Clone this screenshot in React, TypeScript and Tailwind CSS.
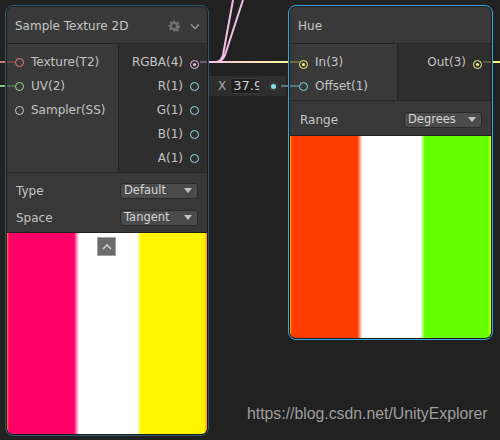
import React from 'react';

const font = { fontFamily: '"DejaVu Sans", Verdana, sans-serif' };

function Port({ color, filled, side }: { color: string; filled?: boolean; side: 'in' | 'out' }) {
  return (
    <span
      className={`relative inline-flex items-center justify-center w-[9px] h-[9px] rounded-full border-[1.5px] ${color} ${side === 'in' ? 'mr-[7px]' : 'ml-[7px]'}`}
    >
      {filled && <span className="w-[3px] h-[3px] rounded-full bg-current" />}
    </span>
  );
}

function Dropdown({ label }: { label: string }) {
  return (
    <div className="flex items-center justify-between w-[78px] h-[16px] rounded-[3px] bg-[#4b4b4b] border border-[#2a2a2a] pl-[3px] pr-[5px] text-[11.5px] text-[#d4d4d4]">
      <span>{label}</span>
      <svg width="8" height="5" viewBox="0 0 8 5">
        <path d="M0 0 H8 L4 5 Z" fill="#c4c4c4" />
      </svg>
    </div>
  );
}

function Header({ title, tools }: { title: string; tools?: boolean }) {
  return (
    <div className="flex items-center justify-between h-[37px] bg-[#393939] border-b border-[#242424] pt-[2px] pl-[8px] pr-[7px] shrink-0">
      <span className="text-[12px] text-[#c6c6c6]">{title}</span>
      {tools && (
        <div className="flex items-center gap-[10px]">
          <svg width="12" height="12" viewBox="0 0 24 24">
            <path
              fill="#707070"
              d="M10 1h4l.6 3.2 2 .9 2.7-1.9 2.8 2.8-1.9 2.7.9 2 3.2.6v4l-3.2.6-.9 2 1.9 2.7-2.8 2.8-2.7-1.9-2 .9L14 23h-4l-.6-3.2-2-.9-2.7 1.9-2.8-2.8 1.9-2.7-.9-2L1 14v-4l3.2-.6.9-2L3.2 4.7 6 1.9l2.7 1.9 2-.9Z M12 8a4 4 0 1 0 0 8a4 4 0 1 0 0-8Z"
              fillRule="evenodd"
            />
          </svg>
          <svg width="10" height="7" viewBox="0 0 10 7">
            <path d="M1 1.5 L5 5.5 L9 1.5" stroke="#9a9a9a" strokeWidth="1.4" fill="none" />
          </svg>
        </div>
      )}
    </div>
  );
}

export default function App() {
  return (
    <div className="relative w-[500px] h-[440px] bg-[#212121] overflow-hidden" style={font}>
      {/* wires */}
      <svg className="absolute left-0 top-0" width="500" height="440">
        <line x1="0" y1="62" x2="6" y2="62" stroke="#c97a7a" strokeWidth="2" />
        <line x1="0" y1="86" x2="6" y2="86" stroke="#7dc47d" strokeWidth="2" />
        <path d="M209 62 H216 Q221 62 223 55 L233 0" stroke="#f3bfe5" strokeWidth="2" fill="none" />
        <path d="M216 62 Q222 62 225 55 L243 0" stroke="#f3bfe5" strokeWidth="2" fill="none" />
        <defs>
          <linearGradient id="pw" x1="0" x2="1" y1="0" y2="0">
            <stop offset="0" stopColor="#f5c3e6" />
            <stop offset="1" stopColor="#fbfb9c" />
          </linearGradient>
        </defs>
        <rect x="209" y="61" width="81" height="2" fill="url(#pw)" />
        <line x1="493" y1="62" x2="500" y2="62" stroke="#f6f67e" strokeWidth="2" />
      </svg>

      {/* Sample Texture 2D node */}
      <div className="absolute left-[5px] top-[5px] w-[204px] h-[431px] rounded-[8px] border border-[#2e5870] p-px bg-[#1b1b1b]">
        <div className="flex flex-col h-full rounded-[6px] overflow-hidden bg-[#2e2e2e]">
          <Header title="Sample Texture 2D" tools />
          <div className="flex h-[128px] shrink-0 text-[12px] text-[#c4c4c4]">
            <div className="relative w-[112px] bg-[#393939] border-r border-[#242424] pt-[5px] pl-[8px]">
              <div className="flex items-center h-[24px] pt-[2px]">
                <Port color="border-[#f08080]" side="in" />
                Texture(T2)
              </div>
              <div className="flex items-center h-[24px] pt-[2px]">
                <Port color="border-[#8fe08f]" side="in" />
                UV(2)
              </div>
              <div className="flex items-center h-[24px] pt-[2px]">
                <Port color="border-[#c8c8c8]" side="in" />
                Sampler(SS)
              </div>
              <span className="absolute left-0 top-[17px] w-[8px] h-[1.5px] bg-[#6a4848]" />
              <span className="absolute left-0 top-[41px] w-[8px] h-[1.5px] bg-[#4f6a4f]" />
            </div>
            <div className="relative flex-1 flex flex-col items-end pt-[5px] pr-[8px]">
              <div className="flex items-center h-[24px] pt-[2px]">
                RGBA(4)
                <span className="text-[#f3bde6]">
                  <Port color="border-[#f3bde6]" filled side="out" />
                </span>
              </div>
              {['R(1)', 'G(1)', 'B(1)', 'A(1)'].map((p) => (
                <div key={p} className="flex items-center h-[24px] pt-[2px]">
                  {p}
                  <Port color="border-[#7fe0e4]" side="out" />
                </div>
              ))}
              <span className="absolute right-0 top-[17px] w-[7px] h-[1.5px] bg-[#6a5a66]" />
            </div>
          </div>
          <div className="flex flex-col justify-center gap-[9px] h-[60px] shrink-0 bg-[#383838] border-t border-[#242424] pt-[3px] pl-[9px] pr-[9px] text-[12px] text-[#c4c4c4]">
            <div className="flex items-center justify-between">
              <span>Type</span>
              <Dropdown label="Default" />
            </div>
            <div className="flex items-center justify-between">
              <span>Space</span>
              <Dropdown label="Tangent" />
            </div>
          </div>
          <div className="relative flex-1 border-t border-[#1e1e1e] bg-[linear-gradient(to_right,#ff8a3a_0%,#ff0066_1%,#ff0066_33.5%,#ffffff_36%,#ffffff_65%,#fff500_67%,#fff500_98.5%,#ff9a30_100%)]">
            <div className="absolute left-[90px] top-[4px] w-[19px] h-[19px] bg-[#6b6b6b] border border-[#a3a3a3] flex items-center justify-center">
              <svg width="10" height="6" viewBox="0 0 10 6">
                <path d="M1 5 L5 1 L9 5" stroke="#d0d0d0" strokeWidth="1.6" fill="none" />
              </svg>
            </div>
          </div>
        </div>
      </div>

      {/* X vector field */}
      <div className="absolute left-[209px] top-[76px] w-[77px] h-[20px] bg-[#2e2e2e] flex items-center pl-[9px] text-[12px] text-[#a8a8a8]">
        <span>X</span>
        <div className="ml-[4px] w-[30px] h-[16px] shrink-0 rounded-[3px] bg-[#1f1f1f] border border-[#3a3a3a] overflow-hidden text-[13px] text-[#d0d0d0] leading-[14px] pl-[2px] whitespace-nowrap">
          37.9
        </div>
        <span className="ml-[11px] w-[5px] h-[5px] shrink-0 rounded-full bg-[#7fe0e4] ring-2 ring-[#3b3b3b]" />
      </div>
      <span className="absolute left-[281px] top-[85px] w-[9px] h-[1.5px] bg-[#52797c]" />

      {/* Hue node */}
      <div className="absolute left-[288px] top-[5px] w-[205px] h-[335px] rounded-[8px] border border-[#3aa7e4] p-px bg-[#1b1b1b]">
        <div className="flex flex-col h-full rounded-[6px] overflow-hidden bg-[#2e2e2e]">
          <Header title="Hue" />
          <div className="flex h-[56px] shrink-0 text-[12px] text-[#c4c4c4]">
            <div className="relative w-[108px] bg-[#393939] border-r border-[#242424] pt-[5px] pl-[9px]">
              <div className="flex items-center h-[24px] pt-[2px]">
                <span className="text-[#f8f87f]">
                  <Port color="border-[#f8f87f]" filled side="in" />
                </span>
                In(3)
              </div>
              <div className="flex items-center h-[24px] pt-[2px]">
                <Port color="border-[#7fe0e4]" side="in" />
                Offset(1)
              </div>
              <span className="absolute left-0 top-[17px] w-[9px] h-[1.5px] bg-[#6c6c48]" />
              <span className="absolute left-0 top-[41px] w-[9px] h-[1.5px] bg-[#52797c]" />
            </div>
            <div className="relative flex-1 flex flex-col items-end pt-[5px] pr-[9px]">
              <div className="flex items-center h-[24px] pt-[2px]">
                Out(3)
                <span className="text-[#f8f87f]">
                  <Port color="border-[#f8f87f]" filled side="out" />
                </span>
              </div>
              <span className="absolute right-0 top-[17px] w-[8px] h-[1.5px] bg-[#5a5a40]" />
            </div>
          </div>
          <div className="flex items-center justify-between h-[35px] shrink-0 bg-[#383838] border-t border-[#242424] pt-[3px] pl-[10px] pr-[9px] text-[12px] text-[#c4c4c4]">
            <span>Range</span>
            <Dropdown label="Degrees" />
          </div>
          <div className="flex-1 border-t border-[#1e1e1e] bg-[linear-gradient(to_right,#ffb000_0%,#ff3c00_1%,#ff3c00_33.5%,#ffffff_36%,#ffffff_65%,#66ff00_67%,#66ff00_98.5%,#d8ff00_100%)]" />
        </div>
      </div>

      <div
        className="absolute left-[247px] top-[402px] text-[15.8px] text-[#9e9e9e]"
        style={{ fontFamily: '"Liberation Sans", Arial, sans-serif' }}
      >
        https://blog.csdn.net/UnityExplorer
      </div>
    </div>
  );
}
